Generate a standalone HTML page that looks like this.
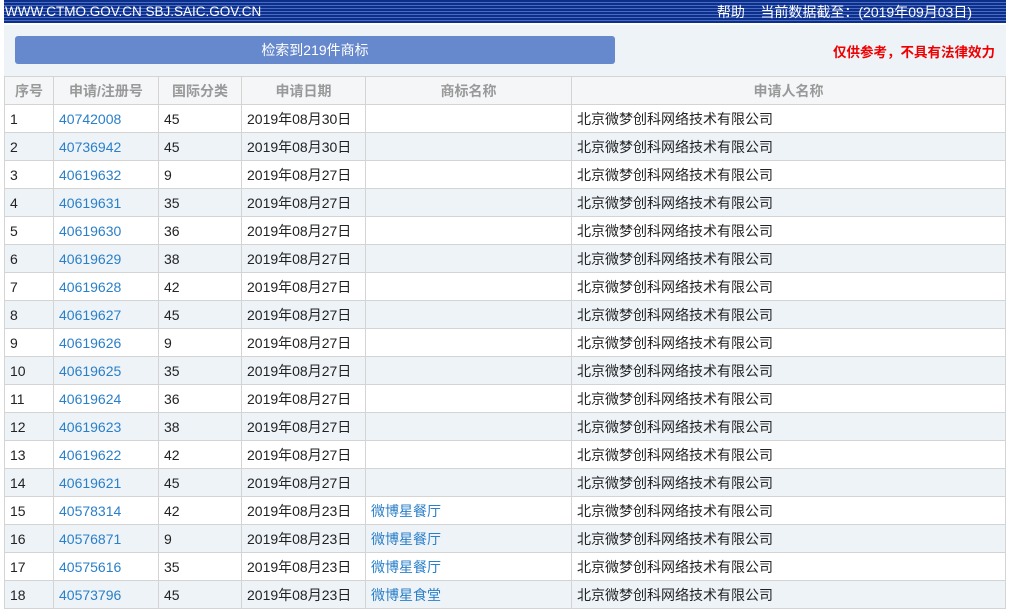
<!DOCTYPE html>
<html><head><meta charset="utf-8"><style>
*{margin:0;padding:0;box-sizing:border-box}
body{width:1011px;height:608px;overflow:hidden;background:#fff;font-family:"Liberation Sans","Noto Sans CJK SC",sans-serif;font-size:14px;color:#222}
.top{position:absolute;left:4px;top:0;width:1002px;height:23px;background:repeating-linear-gradient(180deg,#0d2f8c 0,#0d2f8c 2px,#4a6cc0 2px,#4a6cc0 3px);color:#fff;font-size:14px;line-height:24px}
.top .l{position:absolute;left:1px;top:0;font-size:13.5px}
.top .r{position:absolute;right:34px;top:0}
.wrap{position:absolute;left:4px;top:25px;width:1002px;height:583px;background:#eef3f8}
.btn{position:absolute;left:11px;top:11px;width:600px;height:28px;background:#6688cc;border-radius:3px;color:#fff;text-align:center;line-height:28px;font-size:14px}
.warn{position:absolute;right:11px;top:16px;color:#e00;font-weight:bold;font-size:13.5px}
table{position:absolute;left:0;top:51px;border-collapse:collapse;width:1002px}
td,th{border:1px solid #d4d4d4;height:28px;padding:0 5px;text-align:left;white-space:nowrap;font-weight:normal}
th{color:#999;font-weight:bold;text-align:center;background:#f4f6f8;height:28px}
tr:nth-child(even) td{background:#fff}
tr:nth-child(odd) td{background:#eef3f8}
a{color:#2a7fc8;text-decoration:none}
</style></head><body>
<div class="top"><span class="l">WWW.CTMO.GOV.CN SBJ.SAIC.GOV.CN</span><span class="r">帮助&nbsp;&nbsp;&nbsp;&nbsp;当前数据截至：(2019年09月03日)</span></div>
<div class="wrap">
<div class="btn">检索到219件商标</div>
<div class="warn">仅供参考，不具有法律效力</div>
<table>
<tr><th style="width:49px">序号</th><th style="width:105px">申请/注册号</th><th style="width:83px">国际分类</th><th style="width:124px">申请日期</th><th style="width:206px">商标名称</th><th>申请人名称</th></tr>
<tr><td>1</td><td><a>40742008</a></td><td>45</td><td>2019年08月30日</td><td></td><td>北京微梦创科网络技术有限公司</td></tr>
<tr><td>2</td><td><a>40736942</a></td><td>45</td><td>2019年08月30日</td><td></td><td>北京微梦创科网络技术有限公司</td></tr>
<tr><td>3</td><td><a>40619632</a></td><td>9</td><td>2019年08月27日</td><td></td><td>北京微梦创科网络技术有限公司</td></tr>
<tr><td>4</td><td><a>40619631</a></td><td>35</td><td>2019年08月27日</td><td></td><td>北京微梦创科网络技术有限公司</td></tr>
<tr><td>5</td><td><a>40619630</a></td><td>36</td><td>2019年08月27日</td><td></td><td>北京微梦创科网络技术有限公司</td></tr>
<tr><td>6</td><td><a>40619629</a></td><td>38</td><td>2019年08月27日</td><td></td><td>北京微梦创科网络技术有限公司</td></tr>
<tr><td>7</td><td><a>40619628</a></td><td>42</td><td>2019年08月27日</td><td></td><td>北京微梦创科网络技术有限公司</td></tr>
<tr><td>8</td><td><a>40619627</a></td><td>45</td><td>2019年08月27日</td><td></td><td>北京微梦创科网络技术有限公司</td></tr>
<tr><td>9</td><td><a>40619626</a></td><td>9</td><td>2019年08月27日</td><td></td><td>北京微梦创科网络技术有限公司</td></tr>
<tr><td>10</td><td><a>40619625</a></td><td>35</td><td>2019年08月27日</td><td></td><td>北京微梦创科网络技术有限公司</td></tr>
<tr><td>11</td><td><a>40619624</a></td><td>36</td><td>2019年08月27日</td><td></td><td>北京微梦创科网络技术有限公司</td></tr>
<tr><td>12</td><td><a>40619623</a></td><td>38</td><td>2019年08月27日</td><td></td><td>北京微梦创科网络技术有限公司</td></tr>
<tr><td>13</td><td><a>40619622</a></td><td>42</td><td>2019年08月27日</td><td></td><td>北京微梦创科网络技术有限公司</td></tr>
<tr><td>14</td><td><a>40619621</a></td><td>45</td><td>2019年08月27日</td><td></td><td>北京微梦创科网络技术有限公司</td></tr>
<tr><td>15</td><td><a>40578314</a></td><td>42</td><td>2019年08月23日</td><td><a>微博星餐厅</a></td><td>北京微梦创科网络技术有限公司</td></tr>
<tr><td>16</td><td><a>40576871</a></td><td>9</td><td>2019年08月23日</td><td><a>微博星餐厅</a></td><td>北京微梦创科网络技术有限公司</td></tr>
<tr><td>17</td><td><a>40575616</a></td><td>35</td><td>2019年08月23日</td><td><a>微博星餐厅</a></td><td>北京微梦创科网络技术有限公司</td></tr>
<tr><td>18</td><td><a>40573796</a></td><td>45</td><td>2019年08月23日</td><td><a>微博星食堂</a></td><td>北京微梦创科网络技术有限公司</td></tr>
</table>
</div>
</body></html>
